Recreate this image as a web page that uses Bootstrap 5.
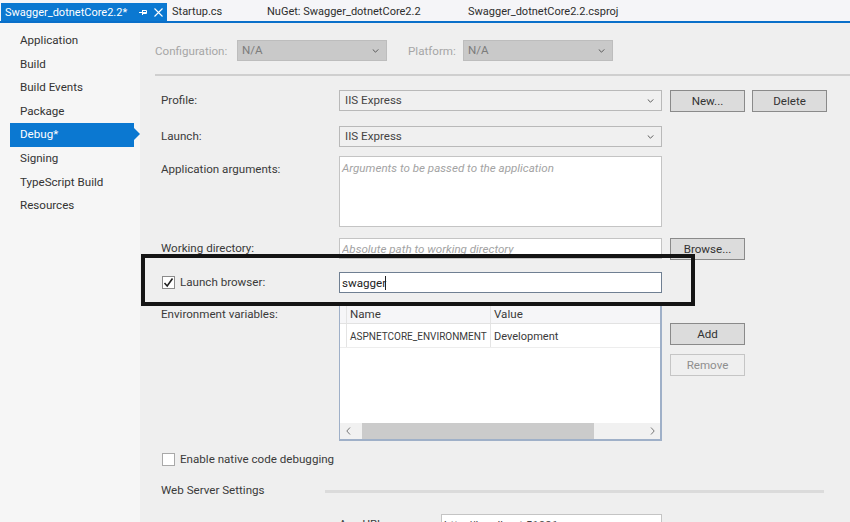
<!DOCTYPE html>
<html lang="en">
<head>
<meta charset="utf-8">
<title>Swagger_dotnetCore2.2</title>
<link href="https://cdn.jsdelivr.net/npm/bootstrap@5.3.0/dist/css/bootstrap.min.css" rel="stylesheet">
<style>
html,body{height:522px;overflow:hidden}
body{background:#efefef;font-family:Roboto,"Noto Sans",sans-serif;font-size:11.6px;color:#3a3a3a;position:relative}
.tabbar{height:23px;background:#f5f5f8;border-bottom:2px solid #0a6fc9;padding-left:1px;align-items:flex-end}
.doc-tab{height:18px;line-height:17px;white-space:nowrap;font-size:11px;color:#2d2d2d}
.doc-tab.on{width:166px;background:#0b78d1;color:#fff;padding-left:4px}
.pin{margin-left:12px;margin-right:6px}
.shell{height:499px}
.side{width:140px;background:#f6f6f6;padding-top:6px;flex:none}
.side-item{height:23.6px;line-height:23px;padding-left:20px;margin-right:6px;color:#333}
.side-item.on{background:#0b78d1;color:#fff;margin-left:10px;padding-left:10px;position:relative}
.side-item.on::after{content:"";position:absolute;left:100%;top:5px;border-left:6px solid #0b78d1;border-top:6.5px solid transparent;border-bottom:6.5px solid transparent}
.pane{flex:1;min-width:0;padding-left:21px}
.line{display:flex;align-items:center;height:21px}
.lbl{width:178px;flex:none}
.sel,.txt{font-size:11.6px;border-radius:0;height:21px;min-height:0;line-height:17px;padding:0 3px 0 5px;color:#444;background-color:#f0f0f0;border:1px solid #b9b9b9;box-shadow:none;font-family:inherit}
.sel{--bs-form-select-bg-img:none;background-size:7px 4px;background-position:right 7px center;background-repeat:no-repeat;background-image:url("data:image/svg+xml,%3Csvg xmlns='http://www.w3.org/2000/svg' viewBox='0 0 8 5'%3E%3Cpath d='M.5.5 4 4 7.5.5' fill='none' stroke='%23555' stroke-width='1.200'/%3E%3C/svg%3E")}
.wide{width:323px;flex:none}
.txt{background:#fff;width:323px;flex:none;border-color:#c4c4c4;padding-left:2px}
.txt::placeholder{color:#a3a3a3;font-style:italic;opacity:1}
.act{width:75px;height:22px;padding:0;font-size:11.6px;line-height:18px;border-radius:0;background:#dcdcdc;border:1px solid #8a8a8a;color:#333;flex:none;margin-left:8px}
.act.second{margin-left:7px}
.act:disabled{background:#efefef;border-color:#c5c5c5;color:#8e8e8e;opacity:1}
.cfgrow{margin-top:17px;margin-left:-6px;color:#a6a6a6}
.cfgrow .sel{background-color:#c9c9c9;color:#7c7c7c;width:150px;flex:none;border-color:#bdbdbd;padding-left:4px}
.cfg-lab{width:82px;flex:none;padding-top:2px}
.cfg-lab2{width:55px;flex:none;margin-left:21px;padding-top:2px}
.rule{height:2px;background:#cfcfcf;margin:13px 0 14px -6px}
.gap15{margin-top:15px}
.args{height:71px;margin-top:9px;align-items:flex-start}
.args .lbl{padding-top:5px}
.args .txt{height:71px;resize:none;padding:3px 2px}
.m11{margin-top:11px}
.m13{margin-top:13px}
.focus{border-color:#6f7f92;color:#222;background:#fff linear-gradient(#222,#222) no-repeat 45px 3px/1px 14px}
.cb{width:13px;height:13px;border:1px solid #8b8b8b;background:#fff;flex:none;margin:0 5px 0 1px;display:flex;align-items:center;justify-content:center}
.cb.off{border-color:#a9a9a9}
.envwrap{display:flex;margin-top:10px;height:138px}
.envwrap .lbl{padding-top:3px}
.grid-box{width:323px;flex:none;background:#fff;border:1px solid #9fb0c8;border-top-color:#6f8fb5;border-width:1px 2px 2px 1px;display:flex;flex-direction:column}
.ghead{display:flex;height:20px;line-height:20px;background:#f6f6f8;border-bottom:1px solid #e2e2e2}
.grow{display:flex;height:24px;line-height:25px;border-bottom:1px solid #ededed;font-size:11px}
.c0{width:7px;border-right:1px solid #e4e4e4;flex:none}
.c1{width:144px;flex:none;padding-left:3px;border-right:1px solid #e4e4e4;white-space:nowrap;overflow:hidden}
.grow .c1{font-size:10px}
.c2{padding-left:3px}
.scroll{margin-top:auto;height:16px;background:#f1f1f1;display:flex;align-items:center}
.thumb{width:232px;height:16px;background:#cbcbcb;margin-left:6px}
.arrow{width:16px;display:flex;justify-content:center;flex:none}
.envbtns{display:flex;flex-direction:column;padding-top:20px;gap:9px}
.head{display:flex;align-items:center;margin-top:13px;height:16px;white-space:nowrap}
.head i{display:block;flex:none;width:499px;height:3px;background:#dbdbdb;margin-left:58px}
.head span{width:106px;flex:none}
.urlrow{margin-top:15px;padding-left:178px}
.urlrow span{width:102px;flex:none}
.urlrow .txt{width:221px}
.callout{position:absolute;left:141px;top:254px;width:554px;height:52px;border:4px solid #141414;pointer-events:none}
</style>
</head>
<body>
<div class="tabbar d-flex">
  <div class="doc-tab on d-flex align-items-center">Swagger_dotnetCore2.2*
    <svg class="pin" width="9" height="9" viewBox="0 0 9 9"><path d="M0 4.500h3M3.500 2v5M3.500 2.500h4v3h-4M3.500 4.500h4" fill="none" stroke="#fff" stroke-width="1"/></svg>
    <svg width="9" height="9" viewBox="0 0 9 9"><path d="M.5.5l8 8M8.500.5l-8 8" stroke="#fff" stroke-width="1.100" fill="none"/></svg>
  </div>
  <div class="doc-tab" style="margin-left:5px;width:95px">Startup.cs</div>
  <div class="doc-tab" style="width:201px">NuGet: Swagger_dotnetCore2.2</div>
  <div class="doc-tab">Swagger_dotnetCore2.2.csproj</div>
</div>
<div class="shell d-flex">
  <nav class="side">
    <div class="side-item">Application</div>
    <div class="side-item">Build</div>
    <div class="side-item">Build Events</div>
    <div class="side-item">Package</div>
    <div class="side-item on">Debug*</div>
    <div class="side-item">Signing</div>
    <div class="side-item">TypeScript Build</div>
    <div class="side-item">Resources</div>
  </nav>
  <main class="pane">
    <div class="line cfgrow">
      <span class="cfg-lab">Configuration:</span>
      <select class="form-select sel" disabled><option>N/A</option></select>
      <span class="cfg-lab2">Platform:</span>
      <select class="form-select sel" disabled><option>N/A</option></select>
    </div>
    <div class="rule"></div>
    <div class="line">
      <span class="lbl">Profile:</span>
      <select class="form-select sel wide"><option>IIS Express</option></select>
      <button class="btn act" type="button">New...</button>
      <button class="btn act second" type="button">Delete</button>
    </div>
    <div class="line gap15">
      <span class="lbl">Launch:</span>
      <select class="form-select sel wide"><option>IIS Express</option></select>
    </div>
    <div class="line args">
      <span class="lbl">Application arguments:</span>
      <textarea class="form-control txt" placeholder="Arguments to be passed to the application"></textarea>
    </div>
    <div class="line m11">
      <span class="lbl">Working directory:</span>
      <input class="form-control txt" placeholder="Absolute path to working directory">
      <button class="btn act" type="button">Browse...</button>
    </div>
    <div class="line m13">
      <span class="lbl d-flex align-items-center">
        <span class="cb"><svg width="11" height="11" viewBox="0 0 11 11"><path d="M1.500 6 4.200 9 9.500 1.500" fill="none" stroke="#222" stroke-width="1.600"/></svg></span>Launch browser:
      </span>
      <input class="form-control txt focus" value="swagger">
    </div>
    <div class="envwrap">
      <span class="lbl">Environment variables:</span>
      <div class="grid-box">
        <div class="ghead"><div class="c0"></div><div class="c1">Name</div><div class="c2">Value</div></div>
        <div class="grow"><div class="c0"></div><div class="c1">ASPNETCORE_ENVIRONMENT</div><div class="c2">Development</div></div>
        <div class="scroll">
          <span class="arrow"><svg width="5" height="8" viewBox="0 0 5 8"><path d="M4 .5.800 4 4 7.500" fill="none" stroke="#777"/></svg></span>
          <div class="thumb"></div>
          <span class="arrow ms-auto"><svg width="5" height="8" viewBox="0 0 5 8"><path d="M1 .5 4.200 4 1 7.500" fill="none" stroke="#777"/></svg></span>
        </div>
      </div>
      <div class="envbtns">
        <button class="btn act" type="button">Add</button>
        <button class="btn act" type="button" disabled>Remove</button>
      </div>
    </div>
    <div class="line m11 mt-2">
      <span class="cb off"></span><span>Enable native code debugging</span>
    </div>
    <div class="head"><span>Web Server Settings</span><i></i></div>
    <div class="line urlrow"><span>App URL:</span><input class="form-control txt" value="http://localhost:51091"></div>
  </main>
</div>
<div class="callout"></div>
</body>
</html>
